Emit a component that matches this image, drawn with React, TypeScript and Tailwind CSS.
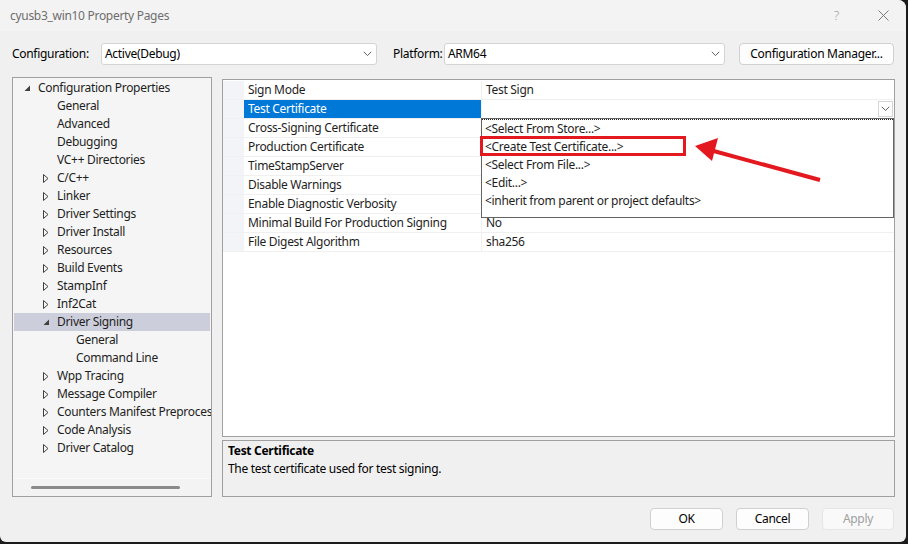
import React from "react";

const FONT = "font-['Noto_Sans',sans-serif]";

function Chevron({ className = "" }: { className?: string }) {
  return (
    <svg width="9" height="6" viewBox="0 0 9 6" className={className}>
      <path d="M0.8 0.8 L4.5 4.6 L8.2 0.8" fill="none" stroke="#606060" strokeWidth="1" />
    </svg>
  );
}

function OpenTri() {
  return (
    <svg width="7" height="7" viewBox="0 0 7 7">
      <polygon points="6,0.5 6,6 0.5,6" fill="#404040" />
    </svg>
  );
}

function ClosedTri() {
  return (
    <svg width="6" height="9" viewBox="0 0 6 9">
      <polygon points="0.5,0.5 5,4.5 0.5,8.5" fill="none" stroke="#404040" strokeWidth="1" />
    </svg>
  );
}

type TreeItem = { label: string; level: number; icon?: "open" | "closed"; selected?: boolean };

const tree: TreeItem[] = [
  { label: "Configuration Properties", level: 0, icon: "open" },
  { label: "General", level: 1 },
  { label: "Advanced", level: 1 },
  { label: "Debugging", level: 1 },
  { label: "VC++ Directories", level: 1 },
  { label: "C/C++", level: 1, icon: "closed" },
  { label: "Linker", level: 1, icon: "closed" },
  { label: "Driver Settings", level: 1, icon: "closed" },
  { label: "Driver Install", level: 1, icon: "closed" },
  { label: "Resources", level: 1, icon: "closed" },
  { label: "Build Events", level: 1, icon: "closed" },
  { label: "StampInf", level: 1, icon: "closed" },
  { label: "Inf2Cat", level: 1, icon: "closed" },
  { label: "Driver Signing", level: 1, icon: "open", selected: true },
  { label: "General", level: 2 },
  { label: "Command Line", level: 2 },
  { label: "Wpp Tracing", level: 1, icon: "closed" },
  { label: "Message Compiler", level: 1, icon: "closed" },
  { label: "Counters Manifest Preproces", level: 1, icon: "closed" },
  { label: "Code Analysis", level: 1, icon: "closed" },
  { label: "Driver Catalog", level: 1, icon: "closed" },
];

const props: { name: string; value: string; selected?: boolean }[] = [
  { name: "Sign Mode", value: "Test Sign" },
  { name: "Test Certificate", value: "", selected: true },
  { name: "Cross-Signing Certificate", value: "" },
  { name: "Production Certificate", value: "" },
  { name: "TimeStampServer", value: "" },
  { name: "Disable Warnings", value: "" },
  { name: "Enable Diagnostic Verbosity", value: "" },
  { name: "Minimal Build For Production Signing", value: "No" },
  { name: "File Digest Algorithm", value: "sha256" },
];

const options = [
  "<Select From Store...>",
  "<Create Test Certificate...>",
  "<Select From File...>",
  "<Edit...>",
  "<inherit from parent or project defaults>",
];

function Combo({ text, width }: { text: string; width: string }) {
  return (
    <div className={`${width} h-[22px] bg-white border border-[#d4d4d4] rounded-[3px] flex items-center pl-[3px] pr-[4px] shrink-0`}>
      <span className="flex-1 text-black">{text}</span>
      <Chevron />
    </div>
  );
}

export default function App() {
  return (
    <div className={`relative w-[908px] h-[544px] bg-[#1c1c1c] overflow-hidden ${FONT} text-[12px] tracking-[-0.3px] text-black`}>
      <div className="w-[906px] h-[542px] bg-[#f0f0f0] rounded-tr-[8px] rounded-br-[6px] rounded-bl-[6px] flex flex-col">
        {/* Title bar */}
        <div className="h-[31px] flex items-center pl-[10px] pr-[17px] bg-[#f3f3f3] rounded-tr-[8px]">
          <span className="flex-1 text-[#6e6e6e] pt-[1px]">cyusb3_win10 Property Pages</span>
          <span className="text-[#a0a0a0] text-[13px] font-light mr-[39px]">?</span>
          <svg width="11" height="11" viewBox="0 0 11 11">
            <path d="M0.5 0.5 L10.5 10.5 M10.5 0.5 L0.5 10.5" stroke="#7a7a7a" strokeWidth="1" />
          </svg>
        </div>

        {/* Configuration row */}
        <div className="mt-[12px] h-[22px] flex items-center pl-[12px]">
          <span className="w-[89px] shrink-0">Configuration:</span>
          <Combo text="Active(Debug)" width="w-[276px]" />
          <span className="ml-[16px] w-[51px] shrink-0">Platform:</span>
          <Combo text="ARM64" width="w-[281px]" />
          <div className="ml-[14px] w-[155px] h-[22px] bg-[#fdfdfd] border border-[#d0d0d0] rounded-[4px] flex items-center justify-center shrink-0">
            Configuration Manager...
          </div>
        </div>

        {/* Main area */}
        <div className="mt-[12px] h-[420px] flex pl-[12px]">
          {/* Tree */}
          <div className="w-[200px] h-[420px] border border-[#a0a0a0] bg-[#f5f5f5] flex flex-col overflow-hidden">
            <div className="flex-1 overflow-hidden pt-[1px]">
              {tree.map((t, i) => {
                const pad = t.level === 0 ? "pl-[11px]" : t.level === 1 ? "pl-[30px]" : "pl-[49px]";
                return (
                  <div
                    key={i}
                    className={`h-[18px] flex items-center whitespace-nowrap overflow-hidden ${t.selected ? "bg-[#cccedb] mx-[1px] pl-[29px]" : pad}`}
                  >
                    <span className="w-[14px] shrink-0 flex items-center">
                      {t.icon === "open" ? <OpenTri /> : t.icon === "closed" ? <ClosedTri /> : null}
                    </span>
                    <span className="text-[#1e1e1e]">{t.label}</span>
                  </div>
                );
              })}
            </div>
            <div className="h-[18px] border-t border-[#fbfbfb] bg-[#f3f3f3] flex items-center pl-[18px]">
              <div className="w-[149px] h-[3px] bg-[#8a8a8a] rounded-full" />
            </div>
          </div>

          {/* Right column */}
          <div className="ml-[10px] w-[673px] flex flex-col pt-[2px]">
            <div className="relative h-[358px] border border-[#a0a0a0] bg-white pt-[1px]">
              {props.map((p, i) => (
                <div key={i} className="h-[19px] flex border-b border-[#f0f0f0]">
                  <div className="w-[21px] bg-[#f2f4f8]" />
                  <div
                    className={`w-[237px] flex items-center pl-[4px] whitespace-nowrap ${p.selected ? "bg-[#0078d7] text-white" : "text-[#1e1e1e]"}`}
                  >
                    {p.name}
                  </div>
                  <div className="flex-1 flex items-center pl-[4px] border-l border-[#f0f0f0] pr-[1px]">
                    <span className="flex-1 text-[#1e1e1e]">{p.value}</span>
                    {p.selected ? (
                      <div className="w-[15px] h-[16px] border border-[#d5d5d5] bg-white flex items-center justify-center">
                        <Chevron />
                      </div>
                    ) : null}
                  </div>
                </div>
              ))}

              {/* Dropdown list */}
              <div className="absolute left-[258px] top-[38px] w-[413px] h-[100px] bg-white border border-[#646464]">
                <div className="border-t border-dotted border-[#202020] h-0" />
                {options.map((o, i) => (
                  <div key={i} className="h-[18px] flex items-center pl-[3px] text-[#1e1e1e] whitespace-nowrap">
                    {o}
                  </div>
                ))}
              </div>
            </div>

            {/* Description */}
            <div className="mt-[3px] h-[57px] border border-[#a0a0a0] bg-[#f0f0f0] pl-[5px] pt-[1px]">
              <div className="h-[18px] flex items-center font-bold">Test Certificate</div>
              <div className="h-[18px] flex items-center">The test certificate used for test signing.</div>
            </div>
          </div>
        </div>

        {/* Buttons */}
        <div className="mt-[11px] h-[22px] flex justify-end pr-[12px] gap-[13px]">
          <div className="w-[73px] h-[22px] bg-[#fdfdfd] border border-[#d0d0d0] rounded-[4px] flex items-center justify-center">OK</div>
          <div className="w-[73px] h-[22px] bg-[#fdfdfd] border border-[#d0d0d0] rounded-[4px] flex items-center justify-center">Cancel</div>
          <div className="w-[72px] h-[22px] bg-[#f9f9f9] border border-[#e5e5e5] rounded-[4px] flex items-center justify-center text-[#a0a0a0]">Apply</div>
        </div>
      </div>

      {/* Annotation: red box + arrow */}
      <div className="absolute left-[480px] top-[136px] w-[206px] h-[20px] border-[3px] border-[#e3191f]" />
      <svg className="absolute left-0 top-0" width="908" height="544" viewBox="0 0 908 544">
        <line x1="820" y1="180" x2="710" y2="150" stroke="#e3191f" strokeWidth="4" />
        <polygon points="695,146 718,138 712,161" fill="#e3191f" />
      </svg>
    </div>
  );
}
